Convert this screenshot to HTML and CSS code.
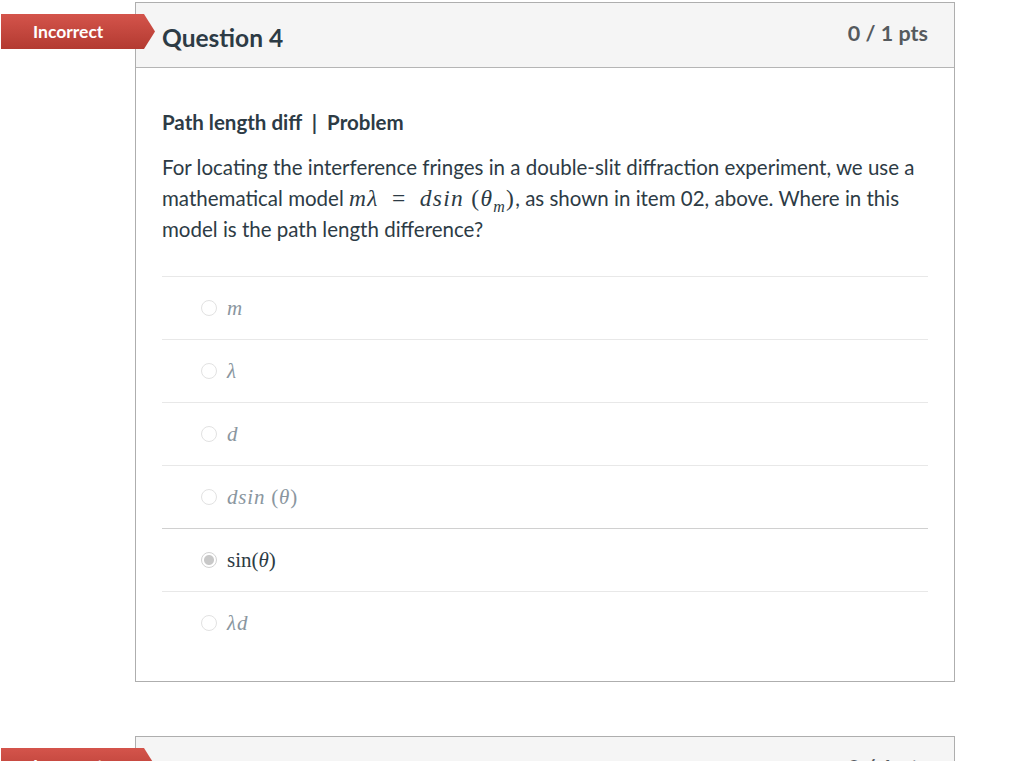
FILE: index.html
```html
<!DOCTYPE html>
<html lang="en">
<head>
<meta charset="utf-8">
<title>Quiz results</title>
<link rel="stylesheet" href="styles.css">
</head>
<body>
<div class="page">
  <section class="question">
    <div class="flag">Incorrect</div>
    <header class="q-header">
      <h2 class="q-name">Question 4</h2>
      <div class="q-pts">0 / 1 pts</div>
    </header>
    <div class="q-body">
      <h3 class="q-title">Path length diff&nbsp; | &nbsp;Problem</h3>
      <p class="q-text">For locating the interference fringes in a double-slit diffraction experiment, we use a mathematical model <span class="math">mλ <span class="up eq">=</span> dsin <span class="up">(</span>θ<sub>m</sub><span class="up">)</span></span>, as shown in item 02, above. Where in this model is the path length difference?</p>
      <ul class="answers">
        <li class="answer"><span class="radio"></span><span class="opt math">m</span></li>
        <li class="answer"><span class="radio"></span><span class="opt math">λ</span></li>
        <li class="answer"><span class="radio"></span><span class="opt math">d</span></li>
        <li class="answer"><span class="radio"></span><span class="opt math">dsin <span class="up">(</span>θ<span class="up">)</span></span></li>
        <li class="answer selected"><span class="radio"></span><span class="opt sel">sin(<i>θ</i>)</span></li>
        <li class="answer"><span class="radio"></span><span class="opt math">λd</span></li>
      </ul>
    </div>
  </section>
  <section class="question">
    <div class="flag">Incorrect</div>
    <header class="q-header">
      <h2 class="q-name">Question 5</h2>
      <div class="q-pts">0 / 1 pts</div>
    </header>
    <div class="q-body">
      <h3 class="q-title">Next problem</h3>
    </div>
  </section>
</div>
</body>
</html>
```

FILE: styles.css
```css
html, body {
  margin: 0;
  padding: 0;
  background: #ffffff;
}
body {
  font-family: "Lato", "Liberation Sans", sans-serif;
  color: #2d3b45;
  overflow: hidden;
}
.page {
  padding: 2px 0 0 135px;
  width: 820px;
}
.question {
  position: relative;
  border: 1px solid #aeaeae;
  margin-bottom: 54px;
  background: #fff;
}
.flag {
  position: absolute;
  left: -135px;
  top: 11px;
  width: 154px;
  height: 35px;
  box-sizing: border-box;
  padding-left: 32px;
  line-height: 35px;
  font-size: 17.5px;
  font-weight: 700;
  color: #ffffff;
  background: linear-gradient(#d4544b, #b33a31);
  clip-path: polygon(0 0, 143px 0, 154px 50%, 143px 100%, 0 100%);
}
.q-header {
  display: flex;
  justify-content: space-between;
  align-items: flex-start;
  height: 64px;
  padding: 0 26px;
  background: #f5f5f5;
  border-bottom: 1px solid #b5b5b5;
}
.q-name {
  margin: 20px 0 0;
  font-size: 24.5px;
  line-height: 30px;
  font-weight: 700;
  color: #2d3b45;
}
.q-pts {
  margin-top: 17px;
  font-size: 21.5px;
  line-height: 26px;
  font-weight: 700;
  color: #555a5e;
}
.q-body {
  padding: 41px 26px 27px;
}
.q-title {
  margin: 0;
  font-size: 20.5px;
  line-height: 26px;
  font-weight: 700;
  color: #2d3b45;
}
.q-text {
  margin: 17px 0 31px;
  font-size: 20.5px;
  line-height: 31px;
}
.math {
  font-family: "Liberation Serif", "DejaVu Serif", serif;
  font-style: italic;
  font-size: 23.5px;
  letter-spacing: 1.3px;
  line-height: 1;
}
.math .up {
  font-style: normal;
}
.math .eq {
  margin: 0 6px;
}
.math sub {
  font-size: 16px;
  line-height: 0;
}
.answers {
  list-style: none;
  margin: 0;
  padding: 0;
  border-top: 1px solid #e8e8e8;
}
.answer {
  display: flex;
  align-items: center;
  gap: 10px;
  height: 62px;
  padding-left: 39px;
  border-bottom: 1px solid #e8e8e8;
}
.answer:last-child {
  border-bottom: none;
}
.answer:nth-child(4) {
  border-bottom-color: #d0d0d0;
}
.radio {
  width: 14px;
  height: 14px;
  border-radius: 50%;
  border: 1px solid #e2e2e2;
  background: #fff;
  flex: none;
}
.selected .radio {
  background: radial-gradient(circle, #c8c8c8 0 4.5px, #ffffff 5.5px);
  border-color: #d2d2d2;
}
.opt.math {
  color: #8a96a0;
  font-size: 21px;
  letter-spacing: 0.8px;
}
.opt.sel {
  font-family: "Liberation Serif", "DejaVu Serif", serif;
  font-size: 21px;
  color: #2d3b45;
}
```
